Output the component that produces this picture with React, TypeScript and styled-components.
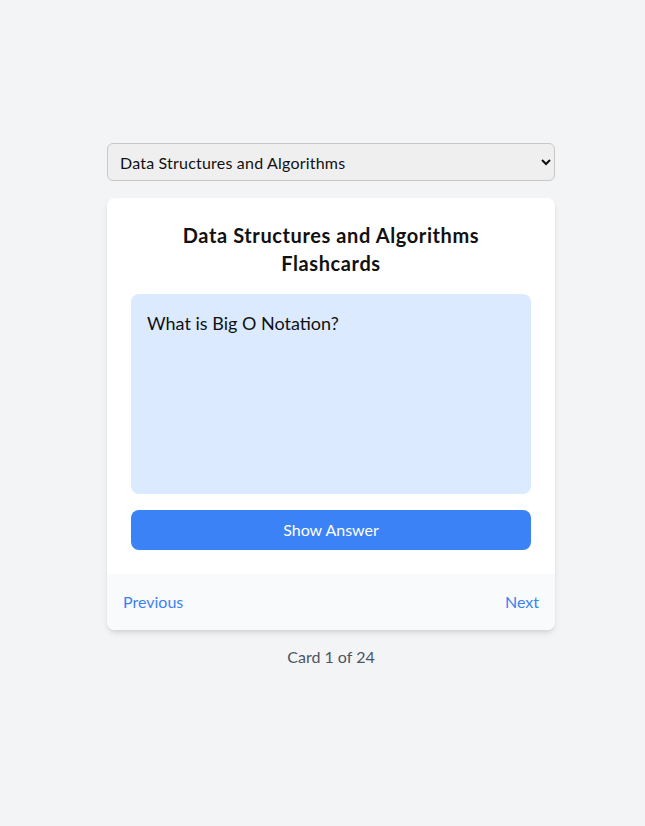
import React, { useState } from 'react';
import styled, { createGlobalStyle } from 'styled-components';

const GlobalStyle = createGlobalStyle`
  html, body {
    margin: 0;
    padding: 0;
    background: #f3f4f6;
    font-family: Lato, 'Noto Sans', sans-serif;
  }
`;

const Page = styled.div`
  min-height: 826px;
  display: flex;
  justify-content: center;
  padding: 143px 0 0 17px;
  box-sizing: border-box;
`;

const Column = styled.div`
  width: 448px;
  display: flex;
  flex-direction: column;
`;

const DeckSelect = styled.select`
  height: 38px;
  width: 100%;
  padding: 0 8px 0 8px;
  font-family: inherit;
  font-size: 16px;
  letter-spacing: 0.2px;
  color: #111;
  background: #efefef;
  border: 1px solid #c8c8c8;
  border-radius: 6px;
  margin-bottom: 17px;
`;

const Card = styled.div`
  background: #fff;
  border-radius: 8px;
  box-shadow: 0 4px 6px -1px rgba(0, 0, 0, 0.1), 0 2px 4px -2px rgba(0, 0, 0, 0.1);
  overflow: hidden;
`;

const CardBody = styled.div`
  padding: 24px;
`;

const Title = styled.h2`
  margin: 0 0 16px;
  font-size: 20px;
  line-height: 28px;
  font-weight: 700;
  letter-spacing: 0.6px;
  text-align: center;
  color: #111;
  position: relative;
  top: -1px;
`;

const Face = styled.div<{ $answer?: boolean }>`
  height: 200px;
  box-sizing: border-box;
  padding: 15px 16px 16px;
  border-radius: 8px;
  background: ${(p) => (p.$answer ? '#dcfce7' : '#dbeafe')};
  font-size: 18px;
  line-height: 28px;
  color: #111;
  margin-bottom: 16px;
`;

const PrimaryButton = styled.button`
  width: 100%;
  height: 40px;
  border: none;
  border-radius: 8px;
  background: #3b82f6;
  color: #fff;
  font-family: inherit;
  font-size: 16px;
  cursor: pointer;
  padding: 0 0 2px;
`;

const Footer = styled.div`
  background: #f9fafb;
  height: 56px;
  padding: 0 16px 2px;
  box-sizing: border-box;
  display: flex;
  align-items: center;
  justify-content: space-between;
`;

const NavLink = styled.button`
  border: none;
  background: none;
  padding: 0;
  font-family: inherit;
  font-size: 16px;
  color: #3b82f6;
  cursor: pointer;
`;

const Counter = styled.div`
  margin-top: 17px;
  text-align: center;
  font-size: 16px;
  color: #4b5563;
`;

const cards = [
  { q: 'What is Big O Notation?', a: 'A way to describe how the running time or space of an algorithm grows with input size.' },
];

export default function App() {
  const [index, setIndex] = useState(0);
  const [showAnswer, setShowAnswer] = useState(false);
  const card = cards[index % cards.length];

  return (
    <>
      <GlobalStyle />
      <Page>
        <Column>
          <DeckSelect defaultValue="dsa">
            <option value="dsa">Data Structures and Algorithms</option>
          </DeckSelect>
          <Card>
            <CardBody>
              <Title>
                Data Structures and Algorithms
                <br />
                Flashcards
              </Title>
              <Face $answer={showAnswer}>{showAnswer ? card.a : card.q}</Face>
              <PrimaryButton onClick={() => setShowAnswer(!showAnswer)}>
                {showAnswer ? 'Hide Answer' : 'Show Answer'}
              </PrimaryButton>
            </CardBody>
            <Footer>
              <NavLink onClick={() => setIndex(Math.max(0, index - 1))}>Previous</NavLink>
              <NavLink onClick={() => setIndex(Math.min(23, index + 1))}>Next</NavLink>
            </Footer>
          </Card>
          <Counter>Card {index + 1} of 24</Counter>
        </Column>
      </Page>
    </>
  );
}
